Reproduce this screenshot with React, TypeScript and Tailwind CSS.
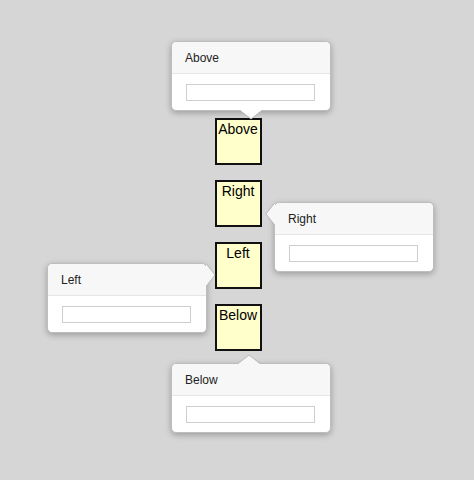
type Side = 'top' | 'right' | 'bottom' | 'left';

function Arrow({ side }: { side: Side }) {
  // arrow drawn outside the popover edge, pointing at the anchor box
  if (side === 'bottom') {
    return (
      <svg className="absolute bottom-[-10px] left-[68px]" width="22" height="10" viewBox="0 0 22 10">
        <polygon points="0,0 11,9 22,0" fill="#ffffff" />
        <polyline points="0,0.5 11,9 22,0.5" fill="none" stroke="#b9b9b9" strokeWidth="1" />
      </svg>
    );
  }
  if (side === 'top') {
    return (
      <svg className="absolute top-[-10px] left-[66px]" width="22" height="10" viewBox="0 0 22 10">
        <polygon points="0,10 11,1 22,10" fill="#f7f7f7" />
        <polyline points="0,9.5 11,1 22,9.5" fill="none" stroke="#b9b9b9" strokeWidth="1" />
      </svg>
    );
  }
  if (side === 'left') {
    return (
      <svg className="absolute left-[-10px] top-[0px]" width="10" height="22" viewBox="0 0 10 22">
        <polygon points="10,0 1,11 10,22" fill="#f7f7f7" />
        <polyline points="9.5,0 1,11 9.5,22" fill="none" stroke="#b9b9b9" strokeWidth="1" />
      </svg>
    );
  }
  return (
    <svg className="absolute right-[-10px] top-[0px]" width="10" height="22" viewBox="0 0 10 22">
      <polygon points="0,0 9,11 0,22" fill="#f7f7f7" />
      <polyline points="0.5,0 9,11 0.5,22" fill="none" stroke="#b9b9b9" strokeWidth="1" />
    </svg>
  );
}

function Popover({ title, arrow, className }: { title: string; arrow: Side; className: string }) {
  return (
    <div
      className={
        'absolute w-[160px] h-[70px] bg-white border border-[#bdbdbd] rounded-[5px] shadow-[0_2px_6px_rgba(0,0,0,0.28)] ' +
        className
      }
    >
      <div className="h-[32px] px-[13px] flex items-center bg-[#f7f7f7] border-b border-[#e6e6e6] rounded-t-[5px] text-[12px] text-[#222]">
        {title}
      </div>
      <div className="pt-[10px] px-[14px]">
        <div className="w-[129px] h-[17px] border border-[#cfcfcf] bg-white" />
      </div>
      <Arrow side={arrow} />
    </div>
  );
}

function Box({ label }: { label: string }) {
  return (
    <div className="w-[47px] h-[47px] border-2 border-[#111] bg-[#ffffcc] flex justify-center text-[14px] leading-[16px] pt-[1px] text-black">
      {label}
    </div>
  );
}

export default function App() {
  return (
    <div
      className="relative w-[474px] h-[480px] bg-[#d6d6d6] overflow-hidden"
      style={{ fontFamily: '"Liberation Sans", Arial, sans-serif' }}
    >
      <div className="flex flex-col items-center pt-[118px] gap-[15px] pl-[2px]">
        <Box label="Above" />
        <Box label="Right" />
        <Box label="Left" />
        <Box label="Below" />
      </div>

      <Popover title="Above" arrow="bottom" className="left-[171px] top-[41px]" />
      <Popover title="Right" arrow="left" className="left-[274px] top-[202px]" />
      <Popover title="Left" arrow="right" className="left-[47px] top-[263px]" />
      <Popover title="Below" arrow="top" className="left-[171px] top-[363px]" />
    </div>
  );
}
